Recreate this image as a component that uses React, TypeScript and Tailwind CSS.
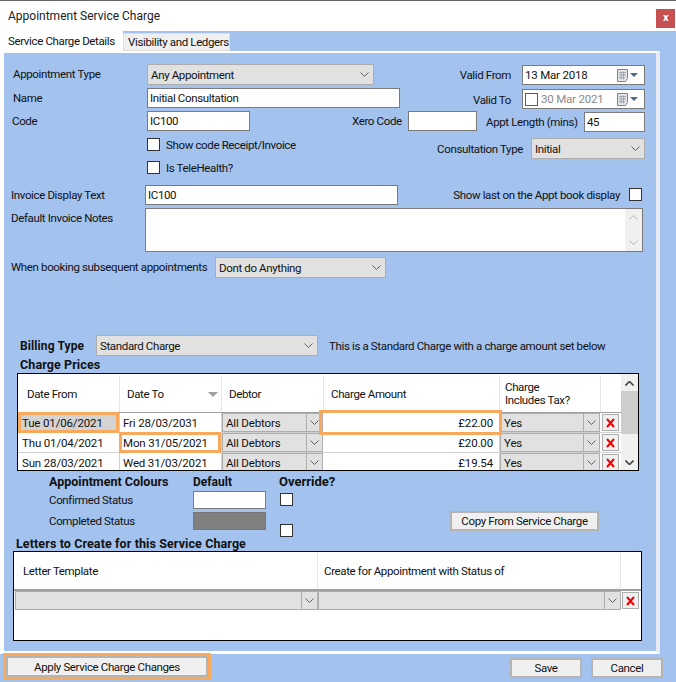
import React from "react";

function Chevron({ className = "", bold = false }: { className?: string; bold?: boolean }) {
  return (
    <svg width="9" height="5" viewBox="0 0 9 5" className={`shrink-0 ${className}`}>
      <polyline points="0.5,0.5 4.5,4.5 8.5,0.5" fill="none" stroke={bold ? "#444" : "#606060"} strokeWidth={bold ? 1.6 : 1} />
    </svg>
  );
}

function Select({ text, className = "" }: { text: string; className?: string }) {
  return (
    <div className={`flex items-center justify-between bg-[#e1e1e1] border border-[#adadad] pl-[3px] pr-[4px] shrink-0 ${className}`}>
      <span>{text}</span>
      <Chevron />
    </div>
  );
}

function Input({ text = "", className = "" }: { text?: string; className?: string }) {
  return (
    <div className={`flex items-center bg-white border border-[#7a7a7a] pl-[2px] shrink-0 ${className}`}>{text}</div>
  );
}

function Check({ className = "" }: { className?: string }) {
  return <div className={`w-[13px] h-[13px] bg-white border border-[#333] shrink-0 ${className}`} />;
}

function Calendar() {
  return (
    <svg width="21" height="13" viewBox="0 0 21 13" className="shrink-0">
      <path d="M0.5 0.5h10v9l-2 3h-8z" fill="#e4e6ea" stroke="#80848a" />
      <path d="M2 3.5h7M2 6h7M2 8.5h6M4 2.5v8M6.5 2.5v8" stroke="#a3a8ae" strokeWidth="1" fill="none" />
      <path d="M13 4h8l-4 4z" fill="#4a6a8e" />
    </svg>
  );
}

function DatePicker({ text, disabled = false, className = "" }: { text: string; disabled?: boolean; className?: string }) {
  return (
    <div className={`flex items-center w-[123px] h-[20px] bg-white border border-[#7a7a7a] pl-[2px] pr-[6px] tracking-[-0.2px] shrink-0 ${className}`}>
      {disabled && <div className="w-[13px] h-[13px] border border-[#0a6fc9] mr-[3px] shrink-0" />}
      <span className={disabled ? "text-[#8a8a8a]" : ""}>{text}</span>
      <div className="ml-auto flex items-center">
        <Calendar />
      </div>
    </div>
  );
}

function DeleteBtn() {
  return (
    <div className="w-[17px] h-[17px] bg-[#f0f0f0] border border-[#adadad] flex items-center justify-center">
      <svg width="9" height="10" viewBox="0 0 9 10">
        <path d="M1 1l7 8M8 1l-7 8" stroke="#f00000" strokeWidth="2" fill="none" />
      </svg>
    </div>
  );
}

function CellSelect({ text, w }: { text: string; w: string }) {
  return (
    <div className={`h-[19px] flex items-stretch bg-[#e1e1e1] border border-[#adadad] ${w}`}>
      <div className="flex-1 flex items-center pl-[3px] whitespace-nowrap overflow-hidden">{text}</div>
      <div className="w-[16px] border-l border-[#adadad] flex items-center justify-center">
        <Chevron />
      </div>
    </div>
  );
}

function Highlight({ className }: { className: string }) {
  return <div className={`absolute z-10 border-[3px] border-[#f9a95b] pointer-events-none ${className}`} />;
}

const rows = [
  { from: "Tue 01/06/2021", to: "Fri 28/03/2031", amount: "£22.00", a: true },
  { from: "Thu 01/04/2021", to: "Mon 31/05/2021", amount: "£20.00", b: true },
  { from: "Sun 28/03/2021", to: "Wed 31/03/2021", amount: "£19.54" },
];

function Button({ text, className = "" }: { text: string; className?: string }) {
  return (
    <div className={`flex items-center justify-center bg-[#f0f0f0] border-2 border-[#b4b4b4] shrink-0 ${className}`}>
      {text}
    </div>
  );
}

export default function App() {
  return (
    <div className="w-[676px] h-[682px] overflow-hidden bg-[#a3c2ee] text-[11.5px] tracking-[-0.36px] leading-[16px] text-[#111] font-['Roboto',sans-serif] flex flex-col">
      <div className="h-[1px] bg-[#666]" />
      <div className="h-[30px] bg-white flex items-center justify-between pl-[8px] pr-[1px]">
        <span className="text-[12px] tracking-normal text-[#222]">Appointment Service Charge</span>
        <div className="w-[19px] h-[19px] bg-[#c75050] text-white font-bold text-[11px] flex items-center justify-center mt-[4px]">x</div>
      </div>

      <div className="h-[20px] flex items-start">
        <div className="w-[123px] h-[21px] bg-white pl-[8px] flex items-center relative z-10 pb-[2px] whitespace-nowrap">Service Charge Details</div>
        <div className="w-[107px] h-[18px] mt-[2px] bg-[#f0f0f0] border border-[#dedede] pl-[4px] flex items-center whitespace-nowrap">Visibility and Ledgers</div>
      </div>

      <div className="w-[660px] h-[603px] border-l-4 border-t-2 border-b-[3px] border-r-4 border-white border-r-[#e8ebf2] shrink-0">
        <div className="flex flex-col h-full pt-[11px]">
          <div className="flex h-[21px] pl-[9px] pr-[11px]">
            <span className="w-[134px] pt-[2px] shrink-0">Appointment Type</span>
            <Select text="Any Appointment" className="w-[227px] h-[21px]" />
            <span className="ml-auto mr-[11px] pt-[3px]">Valid From</span>
            <DatePicker text="13 Mar 2018" className="mt-[1px]" />
          </div>
          <div className="flex h-[21px] mt-[3px] pl-[9px] pr-[11px]">
            <span className="w-[134px] pt-[2px] shrink-0">Name</span>
            <Input text="Initial Consultation" className="w-[253px] h-[20px]" />
            <span className="ml-auto mr-[11px] pt-[4px]">Valid To</span>
            <DatePicker text="30 Mar 2021" disabled className="mt-[1px]" />
          </div>
          <div className="flex h-[21px] mt-[2px] pl-[8px] pr-[11px]">
            <span className="w-[135px] pt-[2px] shrink-0">Code</span>
            <Input text="IC100" className="w-[103px] h-[20px]" />
            <span className="ml-[102px] w-[56px] pt-[2px] whitespace-nowrap shrink-0">Xero Code</span>
            <Input className="w-[69px] h-[20px]" />
            <span className="ml-[9px] pt-[3px] whitespace-nowrap">Appt Length (mins)</span>
            <Input text="45" className="ml-auto w-[61px] h-[20px] mt-[1px]" />
          </div>
          <div className="flex h-[21px] mt-[6px] pl-[143px] pr-[11px]">
            <Check />
            <span className="ml-[6px] -mt-[1px]">Show code Receipt/Invoice</span>
            <span className="ml-auto mr-[8px] pt-[3px]">Consultation Type</span>
            <Select text="Initial" className="w-[114px] h-[21px]" />
          </div>
          <div className="flex h-[13px] mt-[2px] pl-[143px]">
            <Check />
            <span className="ml-[6px] -mt-[1px]">Is TeleHealth?</span>
          </div>
          <div className="flex h-[20px] mt-[11px] pl-[7px] pr-[14px]">
            <span className="w-[134px] pt-[2px] shrink-0">Invoice Display Text</span>
            <Input text="IC100" className="w-[253px] h-[20px]" />
            <span className="ml-auto mr-[9px] pt-[2px]">Show last on the Appt book display</span>
            <Check className="mt-[3px]" />
          </div>
          <div className="flex h-[44px] mt-[3px] pl-[7px] pr-[13px]">
            <span className="w-[134px] pt-[2px] shrink-0">Default Invoice Notes</span>
            <div className="flex-1 bg-white border border-[#7a7a7a] flex justify-end">
              <div className="w-[17px] bg-[#f0f0f0] flex flex-col items-center justify-between py-[6px]">
                <Chevron className="rotate-180 opacity-40" />
                <Chevron className="opacity-40" />
              </div>
            </div>
          </div>
          <div className="flex h-[21px] mt-[5px] pl-[7px]">
            <span className="w-[204px] pt-[2px] whitespace-nowrap shrink-0">When booking subsequent appointments</span>
            <Select text="Dont do Anything" className="w-[171px] h-[21px]" />
          </div>
          <div className="flex h-[21px] mt-[57px] pl-[16px]">
            <span className="w-[76px] pt-[3px] font-bold text-[12px] tracking-[0.1px] shrink-0">Billing Type</span>
            <Select text="Standard Charge" className="w-[222px] h-[21px]" />
            <span className="ml-[11px] pt-[3px] whitespace-nowrap">This is a Standard Charge with a charge amount set below</span>
          </div>
          <div className="h-[16px] pl-[16px] mt-[1px] font-bold text-[12.5px] tracking-[0.1px]">Charge Prices</div>

          <div className="ml-[13px] w-[622px] h-[98px] border border-black bg-white flex overflow-hidden shrink-0">
            <div className="w-[603px] flex flex-col pt-[1px]">
              <div className="flex h-[38px] border-b border-[#a0a0a0] shrink-0 pt-[1px]">
                <div className="w-[102px] border-r border-[#e5e5e5] flex items-center pl-[9px]">Date From</div>
                <div className="w-[102px] border-r border-[#e5e5e5] flex items-center justify-between pl-[7px] pr-[3px]">
                  <span>Date To</span>
                  <svg width="10" height="5" viewBox="0 0 10 5"><path d="M0 0h10L5 5z" fill="#a0a0a0" /></svg>
                </div>
                <div className="w-[102px] border-r border-[#e5e5e5] flex items-center pl-[7px]">Debtor</div>
                <div className="w-[176px] border-r border-[#e5e5e5] flex items-center pl-[7px]">Charge Amount</div>
                <div className="w-[101px] border-r border-[#e5e5e5] flex items-center pl-[5px] leading-[13px]">Charge<br />Includes Tax?</div>
                <div className="w-[20px]" />
              </div>
              {rows.map((r) => (
                <div key={r.from} className="flex h-[20px] shrink-0 border-b border-[#d0d0d0] tracking-[-0.15px]">
                  <div className={`relative w-[102px] border-r border-[#d0d0d0] flex items-center pl-[4px] ${r.a ? "bg-[#d3d3d3]" : ""}`}>
                    {r.from}
                    {r.a && <Highlight className="-top-[1px] bottom-[-1px] left-0 right-0" />}
                  </div>
                  <div className="relative w-[102px] border-r border-[#d0d0d0] flex items-center pl-[3px]">
                    {r.to}
                    {r.b && <Highlight className="-top-[1px] bottom-[-1px] -left-[1px] right-0" />}
                  </div>
                  <div className="w-[102px]">
                    <CellSelect text="All Debtors" w="w-[101px]" />
                  </div>
                  <div className="relative w-[176px] border-r border-[#d0d0d0] flex items-center justify-end pr-[6px]">
                    {r.amount}
                    {r.a && <Highlight className="-top-[3px] -bottom-[3px] -left-[5px] -right-[3px]" />}
                  </div>
                  <div className="w-[101px]">
                    <CellSelect text="Yes" w="w-[100px]" />
                  </div>
                  <div className="w-[20px] flex pl-[1px] pt-[1px]">
                    <DeleteBtn />
                  </div>
                </div>
              ))}
            </div>
            <div className="w-[17px] bg-[#f0f0f0] flex flex-col items-center pt-[1px]">
              <div className="h-[16px] flex items-center"><Chevron bold className="rotate-180" /></div>
              <div className="w-full h-[43px] bg-[#cdcdcd]" />
              <div className="mt-auto h-[16px] flex items-center"><Chevron bold /></div>
            </div>
          </div>

          <div className="flex h-[16px] mt-[3px] pl-[45px] font-bold text-[12px]">
            <span className="w-[144px] text-[12.5px] tracking-normal whitespace-nowrap shrink-0">Appointment Colours</span>
            <span className="w-[86px] tracking-normal shrink-0">Default</span>
            <span className="text-[13px] tracking-normal">Override?</span>
          </div>
          <div className="flex h-[18px] mt-[1px] pl-[45px]">
            <span className="w-[144px] pt-[1px] shrink-0">Confirmed Status</span>
            <div className="w-[73px] h-[18px] bg-white border border-[#7a7a7a] shrink-0" />
            <Check className="ml-[14px] mt-[2px]" />
          </div>
          <div className="flex h-[24px] mt-[3px] pl-[45px]">
            <span className="w-[144px] pt-[1px] shrink-0">Completed Status</span>
            <div className="w-[73px] h-[18px] bg-[#808080] border border-[#777] shrink-0" />
            <Check className="ml-[14px] mt-[12px]" />
            <Button text="Copy From Service Charge" className="ml-[157px] w-[149px] h-[20px] -mt-[1px]" />
          </div>
          <div className="h-[15px] pl-[12px] font-bold text-[12.5px] tracking-[0.1px] whitespace-nowrap">Letters to Create for this Service Charge</div>

          <div className="ml-[9px] w-[629px] h-[90px] border border-black bg-white flex flex-col shrink-0 pt-[1px] overflow-hidden">
            <div className="flex h-[38px] border-b-2 border-[#a0a0a0] shrink-0">
              <div className="w-[304px] border-r border-[#e5e5e5] flex items-center pl-[9px]">Letter Template</div>
              <div className="w-[303px] border-r border-[#e5e5e5] flex items-center pl-[6px]">Create for Appointment with Status of</div>
            </div>
            <div className="flex h-[20px] shrink-0 pl-[1px] items-start">
              <CellSelect text="" w="w-[303px]" />
              <CellSelect text="" w="w-[303px]" />
              <div className="ml-[1px] pt-[1px]"><DeleteBtn /></div>
            </div>
          </div>
        </div>
      </div>

      <div className="flex items-start -mt-[1px] relative">
        <div className="ml-[3px] w-[208px] h-[27px] border-[3px] border-[#f9a95b] shrink-0">
          <Button text="Apply Service Charge Changes" className="w-full h-full" />
        </div>
        <Button text="Save" className="ml-[299px] mt-[5px] w-[72px] h-[20px]" />
        <Button text="Cancel" className="ml-[9px] mt-[5px] w-[72px] h-[20px]" />
      </div>
    </div>
  );
}
